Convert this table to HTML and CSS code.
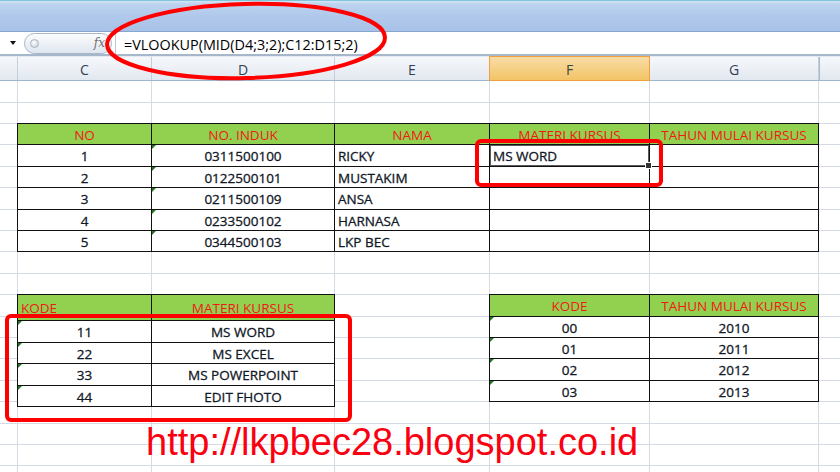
FILE: index.html
```html
<!DOCTYPE html>
<html>
<head>
<meta charset="utf-8">
<link rel="stylesheet" href="styles.css">
</head>
<body>
<div class="window">
  <div class="ribbon"></div>
  <div class="formula-bar">
    <div class="namebox"><span class="dropdown"></span></div>
    <div class="fx-pill"><span class="knob"></span><span class="fx">fx</span></div>
    <div class="formula">=VLOOKUP(MID(D4;3;2);C12:D15;2)</div>
  </div>
  <div class="col-heads">
    <div class="ch"></div>
    <div class="ch">C</div>
    <div class="ch">D</div>
    <div class="ch">E</div>
    <div class="ch active">F</div>
    <div class="ch">G</div>
    <div class="ch"></div>
  </div>
  <div class="sheet">
    <div class="tbl tbl-main">
      <div class="c hd">NO</div>
      <div class="c hd">NO. INDUK</div>
      <div class="c hd">NAMA</div>
      <div class="c hd">MATERI KURSUS</div>
      <div class="c hd">TAHUN MULAI KURSUS</div>

      <div class="c">1</div>
      <div class="c tri">0311500100</div>
      <div class="c left">RICKY</div>
      <div class="c left sel">MS WORD</div>
      <div class="c"></div>

      <div class="c">2</div>
      <div class="c tri">0122500101</div>
      <div class="c left">MUSTAKIM</div>
      <div class="c"></div>
      <div class="c"></div>

      <div class="c">3</div>
      <div class="c tri">0211500109</div>
      <div class="c left">ANSA</div>
      <div class="c"></div>
      <div class="c"></div>

      <div class="c">4</div>
      <div class="c tri">0233500102</div>
      <div class="c left">HARNASA</div>
      <div class="c"></div>
      <div class="c"></div>

      <div class="c">5</div>
      <div class="c tri">0344500103</div>
      <div class="c left">LKP BEC</div>
      <div class="c"></div>
      <div class="c"></div>
    </div>

    <div class="tbl tbl-kursus">
      <div class="c hd left">KODE</div>
      <div class="c hd">MATERI KURSUS</div>
      <div class="c tri">11</div>
      <div class="c">MS WORD</div>
      <div class="c tri">22</div>
      <div class="c">MS EXCEL</div>
      <div class="c tri">33</div>
      <div class="c">MS POWERPOINT</div>
      <div class="c tri">44</div>
      <div class="c">EDIT FHOTO</div>
    </div>

    <div class="tbl tbl-tahun">
      <div class="c hd">KODE</div>
      <div class="c hd">TAHUN MULAI KURSUS</div>
      <div class="c tri">00</div>
      <div class="c">2010</div>
      <div class="c tri">01</div>
      <div class="c">2011</div>
      <div class="c tri">02</div>
      <div class="c">2012</div>
      <div class="c tri">03</div>
      <div class="c">2013</div>
    </div>
  </div>

  <svg class="marks" width="840" height="472" viewBox="0 0 840 472">
    <ellipse cx="246" cy="41" rx="139" ry="37" transform="rotate(-1.5 246 41)" fill="none" stroke="#ff0000" stroke-width="4"/>
    <rect x="477" y="141" width="184" height="44" rx="4" fill="none" stroke="#ff0000" stroke-width="4"/>
    <rect x="7" y="316" width="343" height="104" rx="4" fill="none" stroke="#ff0000" stroke-width="4"/>
  </svg>
  <div class="url">http://lkpbec28.blogspot.co.id</div>
</div>
</body>
</html>
```
FILE: styles.css
```css
* { box-sizing: border-box; }
html, body { margin: 0; padding: 0; }
body {
  width: 840px;
  height: 472px;
  overflow: hidden;
  background: #fff;
  font-family: "Open Sans", "Liberation Sans", sans-serif;
}
.window {
  position: relative;
  width: 840px;
  height: 472px;
  overflow: hidden;
}

/* ribbon strip */
.ribbon {
  height: 32px;
  border-top: 1px solid #7fc6da;
  border-bottom: 1px solid #86a6cf;
  background: linear-gradient(#d6e5f6 0, #bdd3ef 3px, #b0c9eb 50%, #a8c2e8 100%);
}

/* formula bar */
.formula-bar {
  height: 24px;
  display: flex;
  align-items: center;
  border-bottom: 2px solid #a6b7cc;
  background: #fff;
}
.namebox {
  width: 22px;
  height: 22px;
  display: flex;
  align-items: center;
  justify-content: center;
  padding-left: 4px;
}
.dropdown {
  width: 0;
  height: 0;
  border-left: 3px solid transparent;
  border-right: 3px solid transparent;
  border-top: 4px solid #111;
}
.fx-pill {
  margin-left: 2px;
  width: 88px;
  height: 21px;
  border: 1px solid #a7b6cb;
  border-radius: 11px;
  background: linear-gradient(#fbfcfd, #dfe6ef);
  display: flex;
  align-items: center;
  justify-content: space-between;
  padding: 0 6px 0 5px;
}
.knob {
  width: 9px;
  height: 9px;
  border-radius: 50%;
  border: 1px solid #aab4c2;
  background: radial-gradient(circle at 40% 35%, #ffffff, #c4ccd7);
}
.fx {
  font-family: "DejaVu Serif", "Liberation Serif", serif;
  font-style: italic;
  font-size: 12px;
  color: #707070;
}
.formula {
  flex: 1;
  height: 22px;
  margin-left: 3px;
  border-left: 1px solid #b9c7d8;
  padding-left: 8px;
  font-size: 14.4px;
  line-height: 25px;
  color: #000;
  white-space: nowrap;
}

/* column headings */
.col-heads {
  display: grid;
  grid-template-columns: 17px 133px 182px 154px 159px 168px 1fr;
  column-gap: 1px;
  height: 25px;
  border-top: 1px solid #e3eaf3;
  border-bottom: 1px solid #9eb6ce;
  background: #c3cfdd;
}
.ch {
  display: flex;
  align-items: center;
  justify-content: center;
  background: linear-gradient(#f6f8fb, #e2e8f0);
  font-size: 14px;
  color: #2f3f55;
  padding-top: 1px;
}
.ch:last-child { box-shadow: inset 1px 0 0 #a5b9cf; }
.ch.active {
  background: linear-gradient(#f9dca6, #f2c466);
  outline: 1px solid #f0a040;
  color: #3a4a3a;
}

/* worksheet grid */
.sheet {
  --g: #d5dbe5;
  height: 391px;
  display: grid;
  grid-template-columns: 17px 133px 182px 154px 159px 168px 1fr;
  grid-template-rows: repeat(4, 21px 20px 20px 21px 20px);
  gap: 1px;
  background-color: #fff;
  background-image:
    linear-gradient(to right,
      transparent 17px, var(--g) 17px 18px,
      transparent 18px 151px, var(--g) 151px 152px,
      transparent 152px 334px, var(--g) 334px 335px,
      transparent 335px 489px, var(--g) 489px 490px,
      transparent 490px 649px, var(--g) 649px 650px,
      transparent 650px 818px, var(--g) 818px 819px,
      transparent 819px),
    linear-gradient(to bottom,
      transparent 21px, var(--g) 21px 22px,
      transparent 22px 42px, var(--g) 42px 43px,
      transparent 43px 63px, var(--g) 63px 64px,
      transparent 64px 85px, var(--g) 85px 86px,
      transparent 86px 106px, var(--g) 106px 107px);
  background-size: 100% 100%, 100% 107px;
  overflow: hidden;
}

/* tables */
.tbl {
  display: grid;
  gap: 1px;
  background: #111;
  outline: 1px solid #111;
  align-self: start;
}
.tbl-main {
  grid-column: 2 / 7;
  grid-row: 3 / 9;
  grid-template-columns: 133px 182px 154px 159px 168px;
  grid-template-rows: 20px 21px 20px 21px 20px 20px;
}
.tbl-kursus {
  grid-column: 2 / 4;
  grid-row: 11 / 16;
  grid-template-columns: 133px 182px;
  grid-template-rows: 25px 21px 20px 21px 20px;
}
.tbl-tahun {
  grid-column: 5 / 7;
  grid-row: 11 / 16;
  grid-template-columns: 159px 168px;
  grid-template-rows: 21px 20px 20px 21px 20px;
}
.c {
  position: relative;
  display: flex;
  align-items: center;
  justify-content: center;
  background: #fff;
  font-size: 13.5px;
  color: #111827;
  -webkit-text-stroke: 0.3px #111827;
  white-space: nowrap;
  padding-top: 1px;
}
.c.left {
  justify-content: flex-start;
  padding-left: 3px;
}
.c.hd {
  background: #92d050;
  color: #f01818;
  -webkit-text-stroke: 0;
}
.c.tri::before {
  content: "";
  position: absolute;
  left: 0;
  top: 0;
  border-top: 4px solid #1f7a1f;
  border-right: 4px solid transparent;
}
.c.sel {
  z-index: 1;
  box-shadow: inset 0 0 0 1px #5a5a5a, inset 0 0 0 2px #fff;
}
.c.sel::after {
  content: "";
  position: absolute;
  right: -3px;
  bottom: -3px;
  width: 5px;
  height: 5px;
  background: #333;
  border: 1px solid #fff;
}

/* annotations */
.marks {
  position: absolute;
  left: 0;
  top: 0;
  z-index: 5;
  pointer-events: none;
}
.url {
  position: absolute;
  left: 146px;
  top: 423px;
  z-index: 6;
  font-family: "Liberation Sans", Arial, sans-serif;
  font-size: 38px;
  line-height: 38px;
  color: #fa0010;
  white-space: nowrap;
}
```
